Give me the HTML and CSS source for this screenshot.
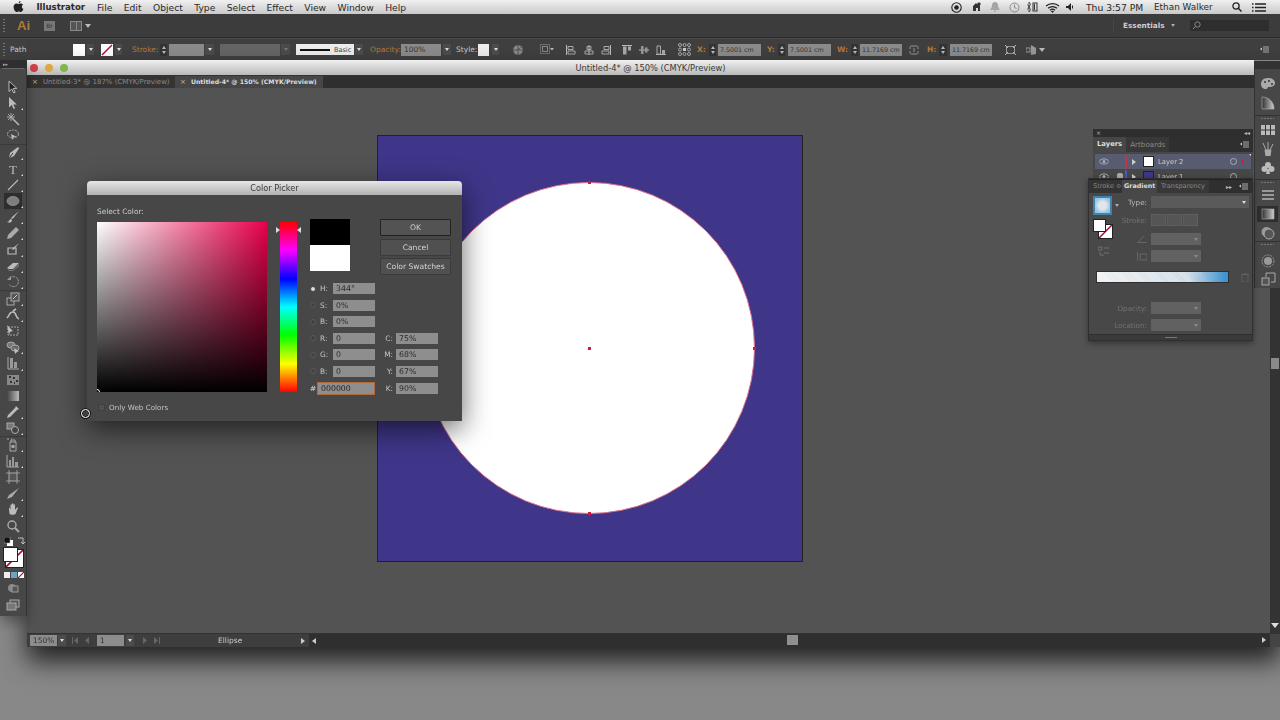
FILE: index.html
```html
<!DOCTYPE html>
<html lang="en">
<head>
    <meta charset="UTF-8">
    <title>Illustrator - Color Picker</title>
    <link rel="stylesheet" href="styles.css">
</head>
<body>

    <!-- Mac menu bar -->
    <div class="menubar">
        <svg class="apple" width="11" height="12" viewBox="0 0 11 12"><path d="M7.6 0c.1 1-.8 2.3-2 2.3C5.5 1.200 6.500.2 7.600 0zM5.600 3c.6 0 1.200-.5 2.200-.5.8 0 1.700.4 2.200 1.200-1.800 1-1.500 3.500.4 4.300-.5 1.300-1.500 3.100-2.600 3.100-.8 0-1.100-.5-2-.5s-1.200.5-2 .5C2.300 11.100.6 8.300.6 6 .6 3.800 2 2.600 3.400 2.600c.9 0 1.600.4 2.200.4z"/></svg>
        <span class="menu-app">Illustrator</span>
        <span class="menu-item">File</span>
        <span class="menu-item">Edit</span>
        <span class="menu-item">Object</span>
        <span class="menu-item">Type</span>
        <span class="menu-item">Select</span>
        <span class="menu-item">Effect</span>
        <span class="menu-item">View</span>
        <span class="menu-item">Window</span>
        <span class="menu-item">Help</span>
        <div class="menu-right">
            <svg width="11" height="11" viewBox="0 0 11 11"><circle cx="5.5" cy="5.5" r="4.7" fill="none" stroke="#222" stroke-width="1.1"/><circle cx="5.5" cy="5.5" r="2.3" fill="#222"/></svg>
            <svg class="mr-fire" width="10" height="10" viewBox="0 0 10 10"><path d="M1 9V4l3-3 1 1 2-2 2 2-1 1v6H6V6H4v3z" fill="#333"/></svg>
            <svg class="mr-bell" width="10" height="10" viewBox="0 0 10 10"><path d="M5 0c2 0 3 1.500 3 3.500 0 2 1 3 1.500 3.500v1h-9V7C1 6.500 2 5.500 2 3.500 2 1.500 3 0 5 0zM4 8.500h2V10H4z" fill="#a5a5a5"/></svg>
            <svg class="mr-clock" width="11" height="11" viewBox="0 0 11 11"><circle cx="5.5" cy="5.5" r="4.5" fill="none" stroke="#888"/><path d="M5.5 2.500v3l2 1" fill="none" stroke="#888"/></svg>
            <svg class="mr-bt" width="11" height="10" viewBox="0 0 11 10"><path d="M.5 2.500l3 5M3.500 2.500l-3 5M2 0v10M2 0l1.500 2.500M2 10l1.500-2.500" fill="none" stroke="#333" stroke-width=".8"/><rect x="6" y="1" width="4" height="8" fill="none" stroke="#333"/><rect x="7" y="2" width="1" height="6" fill="#333"/></svg>
            <svg class="mr-wifi" width="15" height="11" viewBox="0 0 15 11"><path d="M1 4c3.500-3.300 9.500-3.300 13 0M3 6.200c2.500-2.200 6.500-2.200 9 0M5 8.200c1.400-1.100 3.600-1.100 5 0" fill="none" stroke="#222" stroke-width="1.2"/><path d="M7.500 11l-1.500-1.700c1-.6 2-.6 3 0z" fill="#222"/></svg>
            <svg class="mr-vol" width="8" height="8" viewBox="0 0 8 8"><path d="M0 3h2l3-3v8L2 5H0z" fill="#222"/><path d="M6.500 2.500v3" stroke="#222"/></svg>
            <span class="mr-clocktext">Thu 3:57 PM</span>
            <span class="mr-user">Ethan Walker</span>
            <svg class="mr-search" width="10" height="10" viewBox="0 0 10 10"><circle cx="4" cy="4" r="3.1" fill="none" stroke="#222" stroke-width="1.3"/><path d="M6.300 6.300L9.500 9.500" stroke="#222" stroke-width="1.5"/></svg>
            <svg class="mr-list" width="14" height="9" viewBox="0 0 14 9"><path d="M0 1h1.500M0 4.500h1.500M0 8h1.500M3 1h11M3 4.500h11M3 8h11" stroke="#222" stroke-width="1.5"/></svg>
        </div>
    </div>

    <!-- App bar -->
    <div class="appbar">
        <span class="grip"></span>
        <span class="ai-logo">Ai</span>
        <span class="br-box">Br</span>
        <span class="arrange-box"><i></i><i></i></span>
        <span class="tri small"></span>
        <div class="appbar-right">
            <span class="essentials">Essentials</span>
            <span class="tri tiny"></span>
            <span class="help-search">
                <svg width="9" height="9" viewBox="0 0 9 9"><circle cx="5.5" cy="3.5" r="2.7" fill="none" stroke="#888"/><path d="M3.500 5.500L1 8" stroke="#888"/></svg>
            </span>
        </div>
    </div>

    <!-- Control bar -->
    <div class="controlbar">
        <span class="grip"></span>
        <span class="lbl w13 m5">Path</span>
        <span class="swatch white m50"></span>
        <span class="dd m2 w7"></span>
        <svg class="swatch m7" width="12" height="12" viewBox="0 0 12 12"><rect width="12" height="12" fill="#fff"/><path d="M1 11L11 1" stroke="#a01232" stroke-width="1.5"/></svg>
        <span class="dd m2 w7"></span>
        <span class="lbl orange w22 m10">Stroke:</span>
        <span class="spin m6"></span>
        <span class="field m2 w35"></span>
        <span class="dd m1 w9"></span>
        <span class="field dim m6 w60"></span>
        <span class="dd dimdd m1 w9"></span>
        <span class="line-preview m6"><i></i><b>Basic</b></span>
        <span class="dd m1 w8"></span>
        <span class="lbl orange w26 m7">Opacity:</span>
        <span class="field m5 w40">100%</span>
        <span class="dd m2 w8"></span>
        <span class="lbl w17 m5">Style:</span>
        <span class="swatch light w11 m5"></span>
        <span class="dd m3 w7"></span>
        <svg class="m14" width="10" height="10" viewBox="0 0 10 10"><circle cx="5" cy="5" r="4.8" fill="#8a8a8a"/><path d="M5 0v10M0 5h10M5 5l3-3" stroke="#333" stroke-width=".6"/></svg>
        <svg class="m17" width="14" height="11" viewBox="0 0 14 11"><rect x=".5" y=".5" width="9" height="9" fill="none" stroke="#999" stroke-dasharray="1 1"/><rect x="2.5" y="2.5" width="5" height="5" fill="none" stroke="#888"/><path d="M10 4h4l-2 2.500z" fill="#bbb"/></svg>
        <svg class="m12" width="10" height="10" viewBox="0 0 10 10"><path d="M.5 0v10" stroke="#bbb"/><path d="M2 1.500h5v3H2zM2 6h7v3H2z" fill="none" stroke="#aaa"/></svg>
        <svg class="m8" width="10" height="10" viewBox="0 0 10 10"><path d="M5 0v10" stroke="#bbb"/><path d="M3 1.500h4v3H3zM1 6h8v3H1z" fill="none" stroke="#aaa"/></svg>
        <svg class="m7" width="10" height="10" viewBox="0 0 10 10"><path d="M9.500 0v10" stroke="#bbb"/><path d="M3 1.500h5v3H3zM1 6h7v3H1z" fill="none" stroke="#aaa"/></svg>
        <svg class="m11" width="10" height="10" viewBox="0 0 10 10"><path d="M0 .5h10" stroke="#bbb"/><path d="M1 1.500h3.500v8H1z" fill="#aaa"/><path d="M6 1.500h3v4H6z" fill="#aaa"/></svg>
        <svg class="m7" width="10" height="10" viewBox="0 0 10 10"><path d="M0 5h10" stroke="#bbb"/><path d="M2 1h2.500v8H2zM6 2.500h2.500v5H6z" fill="#999"/></svg>
        <svg class="m7" width="10" height="10" viewBox="0 0 10 10"><path d="M0 9.500h10" stroke="#bbb"/><path d="M1 1h3.500v8H1z" fill="none" stroke="#aaa"/><path d="M6 5h3v4H6z" fill="#aaa"/></svg>
        <svg class="m12" width="13" height="13" viewBox="0 0 13 13"><g fill="none" stroke="#aaa"><circle cx="2" cy="2" r="1.5"/><circle cx="6.5" cy="2" r="1.5"/><circle cx="11" cy="2" r="1.5"/><circle cx="2" cy="6.5" r="1.5"/><circle cx="11" cy="6.5" r="1.5"/><circle cx="2" cy="11" r="1.5"/><circle cx="6.5" cy="11" r="1.5"/><circle cx="11" cy="11" r="1.5"/></g><rect x="5" y="5" width="3" height="3" fill="#ccc"/></svg>
        <span class="lbl orange bold w6 m6">X:</span>
        <span class="spin m6"></span>
        <span class="field num m2 w43">7.5001 cm</span>
        <span class="lbl orange bold w6 m6">Y:</span>
        <span class="spin m5"></span>
        <span class="field num m3 w43">7.5001 cm</span>
        <span class="lbl orange bold w8 m6">W:</span>
        <span class="spin m6"></span>
        <span class="field num m2 w42">11.7169 cm</span>
        <svg class="m7" width="10" height="10" viewBox="0 0 10 10"><path d="M1 4V2.500A1.500 1.500 0 0 1 2.500 1h5A1.500 1.500 0 0 1 9 2.500V4M1 6v1.500A1.500 1.500 0 0 0 2.500 9h5A1.500 1.500 0 0 0 9 7.500V6M5 3v4" fill="none" stroke="#999"/></svg>
        <span class="lbl orange bold w7 m8">H:</span>
        <span class="spin m5 w8"></span>
        <span class="field num m3 w42">11.7169 cm</span>
        <svg class="m13" width="11" height="10" viewBox="0 0 11 10"><rect x="1.5" y="1.5" width="8" height="7" fill="none" stroke="#999"/><path d="M0 0l3 3M11 0L8 3M0 10l3-3M11 10L8 7" stroke="#bbb"/></svg>
        <svg class="m10" width="10" height="10" viewBox="0 0 10 10"><rect x="0" y="3" width="4" height="4" fill="none" stroke="#999"/><path d="M5 0l5 3v6L5 10z" fill="#999"/></svg>
        <span class="tri small m3"></span>
        <svg class="panel-menu" width="9" height="7" viewBox="0 0 9 7"><path d="M3 0h6M3 2h6M3 4h6M3 6h6" stroke="#aaa"/><path d="M0 3l2-1.500v3z" fill="#ccc"/></svg>
    </div>

    <!-- Document window -->
    <div class="docwin">
        <div class="doc-title">
            <div class="lights"><i class="red"></i><i class="yellow"></i><i class="green"></i></div>
            <span>Untitled-4* @ 150% (CMYK/Preview)</span>
        </div>
        <div class="doc-tabs">
            <div class="doc-tab"><b>×</b>Untitled-3* @ 187% (CMYK/Preview)</div>
            <div class="doc-tab active"><b>×</b>Untitled-4* @ 150% (CMYK/Preview)</div>
        </div>
        <div class="doc-canvas">
            <div class="artboard">
                <div class="ellipse">
                    <i class="anchor center"></i>
                    <i class="anchor top"></i>
                    <i class="anchor bottom"></i>
                    <i class="anchor right"></i>
                </div>
            </div>
            <div class="vscroll">
                <span class="vthumb"></span>
                <span class="tri down"></span>
            </div>
        </div>
        <div class="statusbar">
            <div class="status-left">
                <span class="field zoomfield">150%</span>
                <span class="dd w8 m1"></span>
                <svg class="navgroup" width="20" height="7" viewBox="0 0 20 7"><path d="M0 0h1v7H0zM6 0v7L2 3.500zM17 0v7l-4-3.500z" fill="#666"/></svg>
                <span class="field pagefield">1</span>
                <span class="dd w8 m2"></span>
                <svg class="navgroup" width="20" height="7" viewBox="0 0 20 7"><path d="M3 0v7l4-3.500zM14 0v7l4-3.500zM19 0h1v7h-1z" fill="#666"/></svg>
                <span class="status-name">Ellipse</span>
                <span class="tri right"></span>
            </div>
            <div class="hscroll">
                <span class="tri left"></span>
                <span class="hthumb"></span>
                <span class="tri right end"></span>
            </div>
            <span class="corner"></span>
        </div>
    </div>

    <!-- Tools panel -->
    <div class="toolbar">
        <div class="tool-head">▸▸</div>
        <div class="tool"><svg viewBox="0 0 14 14"><path d="M3 1v10.500l2.700-2.500 2 4 1.500-.8-2-3.800h3.600z" fill="#222" stroke="#bbb"/></svg></div>
        <div class="tool more"><svg viewBox="0 0 14 14"><path d="M3 1v10.500l2.700-2.500 2 4 1.500-.8-2-3.800h3.600z" fill="#bbb"/></svg></div>
        <div class="tool"><svg viewBox="0 0 14 14"><path d="M6 6l7 7" stroke="#bbb" stroke-width="1.5"/><path d="M5 1v8M1 5h8M2 2l6 6M8 2L2 8" stroke="#aaa"/></svg></div>
        <div class="tool gap"><svg viewBox="0 0 14 14"><ellipse cx="7" cy="6" rx="5.5" ry="4" fill="none" stroke="#aaa" stroke-dasharray="2 1"/><path d="M5 6l1 6 2-3 3 0z" fill="#bbb"/></svg></div>
        <div class="tool more"><svg viewBox="0 0 14 14"><path d="M12 1l1 1.500L8 10l-5 2.500L4 7z" fill="#bbb"/><path d="M3 12.500L7 7" stroke="#333"/></svg></div>
        <div class="tool more"><svg viewBox="0 0 14 14"><text x="7" y="12" class="t-glyph">T</text></svg></div>
        <div class="tool more"><svg viewBox="0 0 14 14"><path d="M2 12L12 2" stroke="#bbb" stroke-width="1.1"/></svg></div>
        <div class="tool more selected"><svg viewBox="0 0 14 14"><ellipse cx="7" cy="7" rx="6" ry="4.5" fill="#7d7d7d" stroke="#aaa" stroke-width=".6"/></svg></div>
        <div class="tool more"><svg viewBox="0 0 14 14"><path d="M13 1L6 7 5 9l2-.5L13 1zM5 9c-2 0-1.500 3-4 3 2 1 5 1 5-2z" fill="#bbb"/></svg></div>
        <div class="tool more"><svg viewBox="0 0 14 14"><path d="M10 1l3 3-8 8-4 1 1-4z" fill="#aaa"/></svg></div>
        <div class="tool more"><svg viewBox="0 0 14 14"><path d="M2 6h8v6H2z" fill="none" stroke="#bbb" stroke-width="1.2"/><path d="M13 1L7 6 6 8l2-.5z" fill="#bbb"/></svg></div>
        <div class="tool more"><svg viewBox="0 0 14 14"><path d="M1 9l6-5h6l-6 6H3z" fill="#bbb"/><path d="M1 9l2 2h4l6-6v2l-6 5H3z" fill="#777"/></svg></div>
        <div class="tool more gap"><svg viewBox="0 0 14 14"><path d="M4 3a5 5 0 1 1-1 6" fill="none" stroke="#aaa" stroke-dasharray="2 1"/><path d="M5 1v4H1z" fill="#999"/></svg></div>
        <div class="tool more"><svg viewBox="0 0 14 14"><rect x="1" y="6" width="7" height="7" fill="none" stroke="#aaa"/><rect x="5" y="1" width="8" height="8" fill="#555" stroke="#aaa"/><path d="M7 7l4-4" stroke="#ccc"/></svg></div>
        <div class="tool more"><svg viewBox="0 0 14 14"><path d="M1 10c3-3 2-6 6-6s2 6 6 7M7 3l3-2" fill="none" stroke="#bbb" stroke-width="1.6"/></svg></div>
        <div class="tool"><svg viewBox="0 0 14 14"><rect x="2" y="3" width="10" height="8" fill="none" stroke="#aaa" stroke-dasharray="2 1"/><path d="M1 1l6 6-3 1-1 3z" fill="#bbb"/></svg></div>
        <div class="tool more"><svg viewBox="0 0 14 14"><ellipse cx="5" cy="5" rx="4" ry="3" fill="#777" stroke="#aaa"/><ellipse cx="9" cy="8" rx="4" ry="3" fill="#666" stroke="#aaa"/><path d="M8 8l1 6 2-2 2-1z" fill="#bbb"/></svg></div>
        <div class="tool more"><svg viewBox="0 0 14 14"><path d="M2 1v12h11" fill="none" stroke="#aaa"/><path d="M4 2h3v10H4zM8 6h3v6H8z" fill="#999"/></svg></div>
        <div class="tool"><svg viewBox="0 0 14 14"><rect x="1" y="2" width="12" height="10" fill="#888"/><path d="M3 3h2v2H3zM7 4h2v2H7zM10 7h2v2h-2zM4 8h2v2H4zM8 9h1v2H8z" fill="#333"/></svg></div>
        <div class="tool"><svg viewBox="0 0 14 14"><defs><linearGradient id="tg"><stop offset="0" stop-color="#444"/><stop offset="1" stop-color="#bbb"/></linearGradient></defs><rect x="1" y="2" width="12" height="10" fill="url(#tg)"/></svg></div>
        <div class="tool more"><svg viewBox="0 0 14 14"><path d="M10 1l3 3-2 1-7 7-3 1 1-3 7-7z" fill="#bbb"/></svg></div>
        <div class="tool more gap"><svg viewBox="0 0 14 14"><rect x="1" y="2" width="7" height="6" fill="#777" stroke="#aaa"/><circle cx="9" cy="9" r="3.5" fill="#444" stroke="#aaa"/></svg></div>
        <div class="tool more"><svg viewBox="0 0 14 14"><path d="M1 1h2M5 1h1" stroke="#aaa"/><path d="M4 4h6v9H4z" fill="none" stroke="#aaa"/><circle cx="7" cy="8.5" r="1.8" fill="#aaa"/><path d="M5 4V2h4v2" fill="none" stroke="#aaa"/></svg></div>
        <div class="tool more"><svg viewBox="0 0 14 14"><path d="M1 13V1M1 13h12" stroke="#aaa"/><path d="M3 6h2v7H3zM6 3h2v10H6zM9 8h3v5H9z" fill="#999"/></svg></div>
        <div class="tool"><svg viewBox="0 0 14 14"><rect x="3" y="3" width="8" height="8" fill="#555" stroke="#aaa"/><path d="M3 0v3H0M11 0v3h3M3 14v-3H0M11 14v-3h3" fill="none" stroke="#999"/></svg></div>
        <div class="tool more"><svg viewBox="0 0 14 14"><path d="M13 1L3 8l-2 4 5-2z" fill="#aaa"/></svg></div>
        <div class="tool more"><svg viewBox="0 0 14 14"><path d="M3 6c0-3 1-1 1.500 1l0-5c0-1 1.500-1 1.500 0v4-5c0-1 1.500-1 1.500 0v5-4c0-1 1.500-1 1.500 0v5l1.500-2c1-1 2 0 1 1l-2 5c-1 1-5 1-6 0z" fill="#bbb"/></svg></div>
        <div class="tool"><svg viewBox="0 0 14 14"><circle cx="6" cy="6" r="4" fill="none" stroke="#aaa" stroke-width="1.4"/><path d="M9 9l4 4" stroke="#aaa" stroke-width="2"/></svg></div>
        <div class="fill-tools">
            <div class="mini-row">
                <svg width="9" height="9" viewBox="0 0 9 9"><rect x="3" y="3" width="6" height="6" fill="#fff"/><rect width="6" height="6" fill="#111" stroke="#bbb" stroke-width=".5"/></svg>
                <svg width="9" height="8" viewBox="0 0 9 8"><path d="M1 1h5v5M4 5l2 2 2-2" fill="none" stroke="#bbb"/></svg>
            </div>
            <div class="fillstroke">
                <span class="fs-stroke"><svg width="17" height="17" viewBox="0 0 17 17"><rect width="17" height="17" fill="#fff"/><path d="M0 17L17 0" stroke="#9c1230" stroke-width="1.6"/></svg></span>
                <span class="fs-fill"></span>
            </div>
            <div class="mode-row"><i class="m-white"></i><i class="m-blue"></i><svg width="6" height="6" viewBox="0 0 6 6"><rect width="6" height="6" fill="#fff"/><path d="M0 6l6-6" stroke="#a01232" stroke-width="1.2"/></svg></div>
        </div>
        <div class="tool"><svg viewBox="0 0 14 14"><circle cx="6" cy="7" r="4" fill="#888"/><rect x="6" y="5" width="6" height="6" fill="#555" stroke="#999"/></svg></div>
        <div class="tool screen"><svg viewBox="0 0 14 14"><rect x="4" y="2" width="9" height="7" fill="#555" stroke="#aaa"/><rect x="1" y="5" width="9" height="7" fill="#777" stroke="#aaa"/></svg></div>
    </div>

    <!-- Panel dock -->
    <div class="dock">
        <div class="dock-grip"></div>
        <div class="dock-group">
            <div class="dock-btn"><svg viewBox="0 0 16 14"><path d="M8 1C3 1 1 4 1 7s2 5 5 5c2 0 1-2 3-2 3 0 6-1 6-4s-3-5-7-5z" fill="#aaa"/><circle cx="5" cy="5" r="1" fill="#333"/><circle cx="9" cy="4" r="1" fill="#333"/><circle cx="12" cy="7" r="1" fill="#333"/></svg></div>
            <div class="dock-btn"><svg viewBox="0 0 16 14"><defs><linearGradient id="dg1"><stop offset="0" stop-color="#333"/><stop offset="1" stop-color="#ccc"/></linearGradient></defs><path d="M2 1c7 0 12 5 12 12H2z" fill="url(#dg1)" stroke="#bbb" stroke-width=".6"/></svg></div>
        </div>
        <div class="dock-group">
            <div class="dock-btn"><svg viewBox="0 0 16 14"><rect x="1" y="2" width="14" height="10" fill="#bbb"/><path d="M5.500 2v10M10.500 2v10M1 7h14" stroke="#333"/></svg></div>
            <div class="dock-btn"><svg viewBox="0 0 16 14"><path d="M5 8h6l-1 6H6zM3 1l3 7M8 0v8M13 2l-3 6" stroke="#aaa" fill="#aaa"/></svg></div>
            <div class="dock-btn"><svg viewBox="0 0 16 14"><circle cx="8" cy="4" r="3" fill="#bbb"/><circle cx="4.5" cy="8" r="3" fill="#bbb"/><circle cx="11.5" cy="8" r="3" fill="#bbb"/><path d="M7 8h2l1 5H6z" fill="#bbb"/></svg></div>
        </div>
        <div class="dock-group">
            <div class="dock-btn"><svg viewBox="0 0 16 14"><path d="M2 2h12v2H2zM2 6h12v2H2zM2 10h12v2H2z" fill="#999"/></svg></div>
            <div class="dock-btn active"><svg viewBox="0 0 16 14"><defs><linearGradient id="dg2"><stop offset="0" stop-color="#333"/><stop offset="1" stop-color="#ccc"/></linearGradient></defs><rect x="2" y="2" width="12" height="10" fill="url(#dg2)" stroke="#aaa" stroke-width=".6"/></svg></div>
            <div class="dock-btn"><svg viewBox="0 0 16 14"><circle cx="6.5" cy="6" r="5" fill="#999"/><circle cx="9" cy="8" r="5" fill="#555" stroke="#aaa"/></svg></div>
        </div>
        <div class="dock-group">
            <div class="dock-btn"><svg viewBox="0 0 16 14"><circle cx="8" cy="7" r="6" fill="none" stroke="#999" stroke-dasharray="2 1"/><circle cx="8" cy="7" r="4" fill="#999"/></svg></div>
            <div class="dock-btn"><svg viewBox="0 0 16 14"><path d="M6 5V1h9v9h-4" fill="none" stroke="#aaa"/><rect x="2" y="6" width="7" height="7" fill="#555" stroke="#aaa"/></svg></div>
        </div>
    </div>

    <!-- Layers panel -->
    <div class="panel layers">
        <div class="panel-top"><span>×</span><span>◂◂</span></div>
        <div class="panel-tabs">
            <span class="ptab on">Layers</span>
            <span class="ptab">Artboards</span>
            <svg class="panel-menu" width="9" height="7" viewBox="0 0 9 7"><path d="M3 0h6M3 2h6M3 4h6M3 6h6" stroke="#aaa"/><path d="M0 3l2-1.500v3z" fill="#ccc"/></svg>
        </div>
        <div class="layer-row sel">
            <svg class="eye" width="10" height="7" viewBox="0 0 10 7"><path d="M0 3.500C2 0 8 0 10 3.500 8 7 2 7 0 3.500z" fill="none" stroke="#aab"/><circle cx="5" cy="3.5" r="1.5" fill="#aab"/></svg>
            <span class="lock"></span>
            <span class="color-bar red"></span>
            <span class="tri right"></span>
            <span class="thumb white"></span>
            <span class="layer-name">Layer 2</span>
            <span class="target"></span>
            <span class="sel-box"></span>
        </div>
        <div class="layer-row">
            <svg class="eye" width="10" height="7" viewBox="0 0 10 7"><path d="M0 3.500C2 0 8 0 10 3.500 8 7 2 7 0 3.500z" fill="none" stroke="#aaa"/><circle cx="5" cy="3.5" r="1.5" fill="#aaa"/></svg>
            <span class="lock on"></span>
            <span class="color-bar blue"></span>
            <span class="tri right"></span>
            <span class="thumb navy"></span>
            <span class="layer-name">Layer 1</span>
            <span class="target"></span>
        </div>
    </div>

    <!-- Gradient panel -->
    <div class="panel gradient">
        <div class="panel-tabs big">
            <span class="ptab stroke-tab">Stroke ≎</span>
            <span class="ptab on grad-tab">Gradient</span>
            <span class="ptab">Transparency</span>
            <span class="pan-more">▸▸</span>
            <svg class="panel-menu" width="9" height="7" viewBox="0 0 9 7"><path d="M3 0h6M3 2h6M3 4h6M3 6h6" stroke="#aaa"/><path d="M0 3l2-1.500v3z" fill="#ccc"/></svg>
        </div>
        <div class="grad-body">
            <div class="grad-left">
                <div class="grad-preview-wrap">
                    <span class="grad-preview"></span>
                    <span class="tri tiny"></span>
                </div>
                <div class="fillstroke small">
                    <span class="fs-stroke"><svg width="13" height="13" viewBox="0 0 13 13"><rect width="13" height="13" fill="#fff"/><path d="M0 13L13 0" stroke="#9c1230" stroke-width="1.5"/></svg></span>
                    <span class="fs-fill"></span>
                </div>
                <svg class="reverse" width="11" height="10" viewBox="0 0 11 10"><path d="M0 1h4v3H0zM6 2h5M6 7h5M2 6v3h4" fill="none" stroke="#707070"/></svg>
            </div>
            <div class="grad-form">
                <div class="g-row first"><label>Type:</label><span class="g-select wide"><span class="tri tiny"></span></span></div>
                <div class="g-row stroke-row"><label class="off">Stroke:</label><span class="g-btns"><i></i><i></i><i></i></span></div>
                <div class="g-row angle-row"><label class="off"><svg width="10" height="8" viewBox="0 0 10 8"><path d="M0 7.500h10M1 7.500L7 1" fill="none" stroke="#666"/></svg></label><span class="g-select"><span class="tri tiny dim"></span></span></div>
                <div class="g-row aspect-row"><label class="off"><svg width="10" height="9" viewBox="0 0 10 9"><path d="M.5 0v9M3 2h7v6H3z" fill="none" stroke="#666"/></svg></label><span class="g-select"><span class="tri tiny dim"></span></span></div>
            </div>
        </div>
        <div class="grad-ramp-row">
            <span class="grad-ramp"></span>
            <svg width="8" height="9" viewBox="0 0 8 9"><path d="M0 1.500h8M1 2v7h6V2M3 1V0h2v1" fill="none" stroke="#5f5f5f"/></svg>
        </div>
        <div class="grad-bottom">
            <div class="g-row"><label class="off">Opacity:</label><span class="g-select"><span class="tri tiny dim"></span></span></div>
            <div class="g-row"><label class="off">Location:</label><span class="g-select"><span class="tri tiny dim"></span></span></div>
        </div>
        <div class="panel-foot"><i></i></div>
    </div>

    <!-- Color Picker dialog -->
    <div class="dialog">
        <div class="dialog-title">Color Picker</div>
        <div class="dialog-body">
            <div class="select-label">Select Color:</div>
            <div class="picker-main">
                <div class="color-field"><i class="field-marker"></i></div>
                <div class="hue-wrap">
                    <i class="hue-arrow l"></i>
                    <div class="hue-bar"></div>
                    <i class="hue-arrow r"></i>
                </div>
                <div class="picker-right">
                    <div class="picker-top">
                        <div class="new-old"><i class="new"></i><i class="old"></i></div>
                        <div class="dlg-buttons">
                            <button class="dlg-btn default">OK</button>
                            <button class="dlg-btn">Cancel</button>
                            <button class="dlg-btn">Color Swatches</button>
                        </div>
                    </div>
                    <div class="val-grid">
                        <span class="vlabel"><i class="radio on"></i>H:</span><span class="val">344°</span><span></span><span></span>
                        <span class="vlabel"><i class="radio"></i>S:</span><span class="val">0%</span><span></span><span></span>
                        <span class="vlabel"><i class="radio"></i>B:</span><span class="val">0%</span><span></span><span></span>
                        <span class="vlabel"><i class="radio"></i>R:</span><span class="val">0</span><span class="clabel">C:</span><span class="val">75%</span>
                        <span class="vlabel"><i class="radio"></i>G:</span><span class="val">0</span><span class="clabel">M:</span><span class="val">68%</span>
                        <span class="vlabel"><i class="radio"></i>B:</span><span class="val">0</span><span class="clabel">Y:</span><span class="val">67%</span>
                        <span class="vlabel hash">#</span><span class="val hex">000000</span><span class="clabel">K:</span><span class="val">90%</span>
                    </div>
                </div>
            </div>
            <div class="web-colors"><i class="check"></i>Only Web Colors</div>
        </div>
    </div>

    <span class="cursor-ring"></span>

</body>
</html>
```

FILE: styles.css
```css
/* Général */
html, body {
    margin: 0;
    height: 720px;
    overflow: hidden;
}
body {
    position: relative;
    width: 1280px;
    background: #888;
    font-family: "DejaVu Sans", sans-serif;
    font-size: 7.5px;
    color: #ccc;
    filter: blur(0.35px);
}
i, b { font-style: normal; font-weight: normal; }
svg { display: block; flex: none; }

/* Menu bar */
.menubar {
    height: 14px;
    display: flex;
    align-items: center;
    gap: 11.4px;
    padding-left: 13px;
    background: linear-gradient(#f0f0f0, #c9c9c9);
    color: #2a2a2a;
    font-size: 9.2px;
}
.apple { fill: #222; margin-right: 1px; }
.menu-app { font-weight: bold; font-size: 8.6px; width: 48px; margin-right: 1.2px; }
.menu-right {
    margin-left: auto;
    display: flex;
    align-items: center;
    margin-right: 14px;
}
.mr-fire { margin-left: 10px; }
.mr-bell { margin-left: 8px; }
.mr-clock { margin-left: 9px; }
.mr-bt { margin-left: 7px; }
.mr-wifi { margin-left: 7px; }
.mr-vol { margin-left: 6px; }
.mr-clocktext { margin-left: 12px; width: 58px; white-space: nowrap; }
.mr-user { margin-left: 10px; width: 64px; white-space: nowrap; font-size: 8.9px; }
.mr-search { margin-left: 14px; }
.mr-list { margin-left: 10px; }

/* App bar */
.appbar {
    height: 24px;
    display: flex;
    align-items: center;
    background: #3c3c3c;
    border-bottom: 1px solid #2b2b2b;
    box-sizing: border-box;
}
.grip {
    width: 2px;
    height: 14px;
    margin-left: 3px;
    flex: none;
    background: repeating-linear-gradient(#777 0 1px, transparent 1px 3px);
}
.ai-logo {
    margin-left: 12px;
    width: 20px;
    color: #b17a36;
    font: bold 13px "Liberation Sans", sans-serif;
}
.br-box {
    margin-left: 7px;
    width: 11px;
    height: 10px;
    background: #777;
    color: #333;
    font-size: 6px;
    line-height: 10px;
    text-align: center;
}
.arrange-box {
    margin-left: 15px;
    width: 12px;
    height: 10px;
    background: #8a8a8a;
    display: flex;
    gap: 1px;
    padding: 1px;
    box-sizing: border-box;
}
.arrange-box i { flex: 1; background: #555; }
.appbar-right {
    margin-left: auto;
    display: flex;
    align-items: center;
    height: 100%;
    margin-right: 11px;
}
.essentials {
    width: 45px;
    padding-left: 9px;
    border-left: 1px solid #484848;
    font-weight: bold;
    font-size: 7.3px;
    color: #cfcfcf;
    line-height: 14px;
}
.help-search {
    margin-left: 15px;
    width: 79px;
    height: 11px;
    background: #2e2e2e;
    padding: 1px 2px;
    box-sizing: border-box;
}
.appbar-right .tiny { margin-left: 3px; }

/* Triangles */
.tri { display: inline-block; flex: none; width: 0; height: 0; }
.tri.small { margin-left: 3px; border: 3px solid transparent; border-top: 4px solid #bbb; border-bottom: 0; }
.tri.tiny { border: 2.5px solid transparent; border-top: 3px solid #aaa; border-bottom: 0; }
.tri.tiny.dim { border-top-color: #8a8a8a; }
.tri.right { border: 3.5px solid transparent; border-left: 4px solid #ccc; border-right: 0; }
.tri.left { border: 3.5px solid transparent; border-right: 4px solid #ccc; border-left: 0; }
.tri.down { border: 4px solid transparent; border-top: 5px solid #ddd; border-bottom: 0; }

/* Control bar */
.controlbar {
    height: 22px;
    display: flex;
    align-items: center;
    background: #404040;
    border-top: 1px solid #4a4a4a;
    box-sizing: border-box;
    font-size: 7.5px;
    color: #c8c8c8;
}
.lbl { flex: none; white-space: nowrap; }
.lbl.orange { color: #b57b38; }
.lbl.bold { font-weight: bold; }
.swatch { flex: none; width: 12px; height: 12px; box-sizing: border-box; }
.swatch.white { background: #fff; }
.swatch.light { background: #eee; }
.dd {
    flex: none;
    height: 11px;
    background: #4c4c4c;
    display: flex;
    align-items: center;
    justify-content: center;
}
.dd::after {
    content: "";
    border: 2.5px solid transparent;
    border-top: 3px solid #ddd;
    border-bottom: 0;
}
.dd.dimdd::after { border-top-color: #777; }
.spin {
    flex: none;
    width: 7px;
    height: 12px;
    background: #343434;
    display: flex;
    flex-direction: column;
    align-items: center;
    justify-content: center;
    gap: 2px;
}
.spin::before {
    content: "";
    border: 2px solid transparent;
    border-bottom: 3px solid #bbb;
    border-top: 0;
}
.spin::after {
    content: "";
    border: 2px solid transparent;
    border-top: 3px solid #bbb;
    border-bottom: 0;
}
.field {
    flex: none;
    height: 12px;
    line-height: 12px;
    background: #8c8c8c;
    color: #333;
    padding-left: 3px;
    box-sizing: border-box;
    overflow: hidden;
    white-space: nowrap;
}
.field.num { font-size: 6.3px; padding-left: 2px; }
.field.dim { background: #666; }
.line-preview {
    flex: none;
    width: 58px;
    height: 11px;
    background: #eee;
    display: flex;
    align-items: center;
    color: #444;
    font-size: 6.5px;
}
.line-preview i { margin-left: 4px; width: 30px; height: 2px; background: #111; }
.line-preview b { margin-left: 4px; }
.panel-menu { margin-left: auto; margin-right: 11px; }

/* Largeurs et marges du control bar */
.w6 { width: 6px; } .w7 { width: 7px; } .w8 { width: 8px; } .w9 { width: 9px; }
.w11 { width: 11px; } .w13 { width: 13px; } .w17 { width: 17px; } .w22 { width: 22px; }
.w26 { width: 26px; } .w35 { width: 35px; } .w40 { width: 40px; } .w42 { width: 42px; }
.w43 { width: 43px; } .w60 { width: 60px; }
.m1 { margin-left: 1px; } .m2 { margin-left: 2px; } .m3 { margin-left: 3px; }
.m5 { margin-left: 5px; } .m6 { margin-left: 6px; }
.m7 { margin-left: 7px; } .m8 { margin-left: 8px; } .m10 { margin-left: 10px; }
.m11 { margin-left: 11px; } .m12 { margin-left: 12px; } .m13 { margin-left: 13px; }
.m14 { margin-left: 14px; } .m17 { margin-left: 17px; } .m50 { margin-left: 50px; }

/* Fenêtre du document */
.docwin {
    position: absolute;
    left: 27px;
    top: 60px;
    width: 1253px;
    height: 587px;
    display: flex;
    flex-direction: column;
    box-shadow: 0 14px 24px rgba(0, 0, 0, 0.75);
}
.doc-title {
    height: 16px;
    flex: none;
    display: flex;
    align-items: center;
    justify-content: center;
    width: 1227px;
    padding-left: 20px;
    position: relative;
    background: linear-gradient(#f0f0f0, #b9b9b9);
    border-bottom: 1px solid #333;
    box-sizing: border-box;
    color: #3a3a3a;
    font-size: 8.3px;
}
.lights {
    position: absolute;
    left: 3px;
    top: 4px;
    display: flex;
    gap: 7px;
}
.lights i { width: 8px; height: 8px; border-radius: 50%; }
.lights .red { background: #d6404a; }
.lights .yellow { background: #dba93f; }
.lights .green { background: #7fb64e; }
.doc-tabs {
    height: 12px;
    flex: none;
    display: flex;
    background: #2f2f2f;
    font-size: 7px;
    color: #8a8a8a;
}
.doc-tab {
    height: 100%;
    padding-left: 2px;
    width: 143px;
    line-height: 12px;
    white-space: nowrap;
    background: #343434;
}
.doc-tab:first-child { margin-left: 3px; }
.doc-tab.active {
    padding-left: 5px;
    background: #474747;
    color: #dcdcdc;
    font-weight: bold;
    font-size: 6.2px;
}
.doc-tab b { margin-right: 5px; color: #bbb; font-size: 7px; }
.doc-canvas {
    flex: 1;
    position: relative;
    background: #535353;
    border-bottom: 1px solid #333;
}
.artboard {
    position: absolute;
    left: 350px;
    top: 47px;
    width: 424px;
    height: 425px;
    background: #3f3689;
    border: 1px solid #222;
}
.ellipse {
    position: absolute;
    left: 45px;
    top: 46px;
    width: 332px;
    height: 332px;
    box-sizing: border-box;
    border-radius: 50%;
    background: #fff;
    border: 1px solid #e0708a;
}
.anchor {
    position: absolute;
    width: 3px;
    height: 3px;
    background: #c8203c;
}
.anchor.center { left: 164px; top: 164px; }
.anchor.top { left: 164px; top: -2px; }
.anchor.bottom { left: 164px; bottom: -2px; }
.anchor.right { right: -2px; top: 164px; }
.vscroll {
    position: absolute;
    right: 0;
    top: 0;
    bottom: 0;
    width: 10px;
    background: #333;
}
.vthumb {
    position: absolute;
    left: 1px;
    top: 270px;
    width: 8px;
    height: 11px;
    background: #8a8a8a;
}
.vscroll .down { position: absolute; left: 1px; bottom: 5px; }
.statusbar {
    height: 13px;
    flex: none;
    display: flex;
    align-items: center;
    background: #3e3e3e;
    font-size: 7.5px;
}
.status-left {
    width: 282px;
    flex: none;
    display: flex;
    align-items: center;
    padding-left: 3px;
    box-sizing: border-box;
}
.zoomfield { width: 27px; height: 11px; line-height: 11px; }
.pagefield { width: 27px; height: 11px; line-height: 11px; margin-left: 5px; }
.navgroup { margin-left: 6px; }
.status-name { margin-left: 58px; width: 83px; color: #ccc; }
.hscroll {
    flex: 1;
    position: relative;
    height: 100%;
    background: #2f2f2f;
    display: flex;
    align-items: center;
    padding-left: 3px;
}
.hthumb {
    position: absolute;
    left: 478px;
    top: 1px;
    width: 11px;
    height: 10px;
    background: #8f8f8f;
}
.hscroll .end { position: absolute; right: 4px; top: 3px; }
.corner { width: 10px; height: 100%; background: #444; flex: none; }

/* Outils */
.toolbar {
    position: absolute;
    left: 0;
    top: 60px;
    width: 27px;
    height: 556px;
    background: #474747;
    border-right: 1px solid #333;
    box-sizing: border-box;
    box-shadow: 0 6px 14px rgba(0, 0, 0, 0.35);
}
.tool-head {
    height: 8px;
    margin-bottom: 11px;
    background: #2f2f2f;
    font-size: 5px;
    line-height: 8px;
    padding-left: 3px;
    color: #aaa;
    box-shadow: 0 3px 0 -2px #666;
}
.tool {
    height: 16.15px;
    display: flex;
    align-items: center;
    justify-content: center;
    position: relative;
}
.tool svg { width: 14px; height: 14px; }
.tool.more::after {
    content: "";
    position: absolute;
    right: 3px;
    bottom: 1px;
    border: 1.5px solid transparent;
    border-right-color: #ddd;
    border-bottom-color: #ddd;
}
.tool.gap { margin-bottom: 1px; box-shadow: 0 1px 0 #3a3a3a; }
.tool.selected {
    background: #2e2e2e;
    margin: 0 4px;
}
.tool.selected.more::after { right: -1px; }
.t-glyph { font: 13px "Liberation Serif", serif; fill: #bbb; text-anchor: middle; }
.fill-tools { padding: 3px 0 0 3px; height: 46px; box-sizing: border-box; }
.mini-row { display: flex; gap: 4px; padding-left: 1px; }
.fillstroke { position: relative; width: 21px; height: 21px; margin-top: 1px; }
.fs-fill {
    position: absolute;
    left: 0;
    top: 0;
    width: 13px;
    height: 13px;
    background: #fff;
    border: 1px solid #222;
}
.fs-stroke { position: absolute; right: 0; bottom: 0; border: 1px solid #222; }
.mode-row { display: flex; gap: 1px; align-items: center; padding: 4px 0 0 1px; }
.mode-row i { width: 6px; height: 6px; }
.m-white { background: #eee; }
.m-blue { background: #6aa5c8; }
.tool.screen { margin-top: 1px; }

/* Dock */
.dock {
    position: absolute;
    left: 1254px;
    top: 61px;
    width: 26px;
    height: 227px;
    background: #474747;
    border-left: 1px solid #333;
    box-sizing: border-box;
}
.dock-grip { height: 8px; background: #333; }
.dock-group {
    position: relative;
    padding: 7px 0 4px;
    border-bottom: 1px solid #333;
    display: flex;
    flex-direction: column;
    gap: 3px;
}
.dock-group::before {
    content: "";
    position: absolute;
    left: 6px;
    right: 6px;
    top: 2px;
    height: 1px;
    background: repeating-linear-gradient(to right, #777 0 2px, transparent 2px 3px);
}
.dock-group:nth-child(2)::before { display: none; }
.dock-group:nth-child(3) { padding: 6px 0 3px; }
.dock-group:nth-child(4) { padding: 7px 0 0; }
.dock-group:nth-child(5) { padding: 11px 0 0; gap: 2px; border-bottom: 0; }
.dock-btn {
    height: 16px;
    display: flex;
    align-items: center;
    justify-content: center;
}
.dock-btn svg { width: 16px; height: 14px; }
.dock-btn.active { background: #2e2e2e; margin: 0 2px; }

/* Panneaux */
.panel {
    position: absolute;
    box-sizing: border-box;
    background: #474747;
    font-size: 7.2px;
}
.layers {
    left: 1093px;
    top: 129px;
    width: 160px;
    height: 55px;
    overflow: hidden;
}
.panel-top {
    height: 8px;
    background: #2e2e2e;
    display: flex;
    justify-content: space-between;
    padding: 0 3px;
    font-size: 6px;
    line-height: 8px;
    color: #bbb;
}
.panel-tabs {
    height: 15px;
    display: flex;
    align-items: center;
    background: #2f2f2f;
}
.panel-tabs .panel-menu { margin-right: 4px; }
.ptab {
    height: 100%;
    line-height: 15px;
    padding: 0 4px;
    color: #888;
    white-space: nowrap;
    background: #383838;
}
.ptab.on { background: #474747; color: #ddd; font-weight: bold; font-size: 6.8px; }
.layer-row {
    position: relative;
    height: 15px;
    margin: 2px 2px 0;
    display: flex;
    align-items: center;
    color: #ccc;
    font-size: 6.8px;
}
.layer-row + .layer-row { margin-top: 0; }
.layer-row.sel { background: #585c70; }
.layer-row.sel::after {
    content: "";
    position: absolute;
    right: 0;
    top: 0;
    border: 1.5px solid transparent;
    border-top-color: #ddd;
    border-right-color: #ddd;
}
.eye { margin-left: 4px; }
.lock { width: 9px; margin-left: 7px; flex: none; }
.lock.on { width: 6px; height: 7px; margin: 0 2px 0 8px; background: #aaa; border-radius: 2px 2px 0 0; }
.color-bar { width: 2px; height: 14px; flex: none; }
.color-bar.red { background: #c0354a; }
.color-bar.blue { background: #3f5fc0; }
.layer-row .tri { margin-left: 5px; }
.thumb { width: 11px; height: 11px; margin-left: 7px; flex: none; border: 1px solid #222; box-sizing: border-box; }
.thumb.white { background: #fff; }
.thumb.navy { background: #3f3689; }
.layer-name { margin-left: 4px; width: 72px; }
.target { width: 5px; height: 5px; border: 1px solid #aab; border-radius: 50%; flex: none; }
.sel-box { width: 3px; height: 4px; margin-left: 4px; background: #d02040; flex: none; }

.gradient {
    left: 1088px;
    top: 178px;
    width: 165px;
    height: 163px;
    background: #484848;
    border: 1px solid #2f2f2f;
    box-shadow: 0 2px 6px rgba(0, 0, 0, 0.4);
}
.panel-tabs.big { height: 13px; border-top: 1px solid #222; font-size: 6.6px; }
.panel-tabs.big .ptab { line-height: 13px; }
.panel-tabs.big .ptab.on { font-size: 6.4px; }
.panel-tabs.big .stroke-tab { width: 29px; padding: 0 0 0 4px; background: #333; }
.panel-tabs.big .grad-tab { width: 29px; padding: 0 4px 0 2px; }
.pan-more { margin-left: 17px; color: #bbb; font-size: 6px; }
.grad-body { display: flex; padding: 3px 0 0 4px; }
.grad-left { width: 28px; flex: none; }
.grad-preview-wrap { display: flex; align-items: center; gap: 3px; }
.grad-preview {
    width: 19px;
    height: 19px;
    flex: none;
    box-sizing: border-box;
    background: radial-gradient(circle, #dfe7ec 0 35%, #9ac4e0 75%);
    border: 2px solid #3f82ad;
}
.fillstroke.small { width: 20px; height: 20px; margin-top: 4px; }
.fillstroke.small .fs-fill { width: 11px; height: 11px; }
.reverse { margin: 7px 0 0 5px; }
.grad-form { flex: 1; }
.g-row { display: flex; align-items: center; }
.g-row label { width: 26px; text-align: right; margin-right: 4px; display: flex; justify-content: flex-end; white-space: nowrap; color: #bbb; }
.g-row label.off { color: #737373; }
.g-select {
    width: 50px;
    height: 12px;
    background: #616161;
    display: flex;
    align-items: center;
    justify-content: flex-end;
    padding-right: 3px;
    box-sizing: border-box;
}
.g-select.wide { width: 98px; background: #5a5a5a; }
.g-select.wide .tri { border-top-color: #ddd; }
.g-btns { display: flex; gap: 1px; }
.g-btns i { width: 15px; height: 12px; background: #555; border: 1px solid #5f5f5f; box-sizing: border-box; }
.stroke-row { margin-top: 6px; }
.angle-row { margin-top: 7px; }
.aspect-row { margin-top: 5px; }
.grad-ramp-row {
    display: flex;
    align-items: center;
    padding-left: 7px;
    margin-top: 9px;
    gap: 12px;
}
.grad-ramp {
    width: 133px;
    height: 12px;
    background:
        linear-gradient(to right, rgba(245, 245, 245, 0.9), rgba(210, 225, 235, 0.85) 70%, #3f93cf 98%),
        repeating-linear-gradient(45deg, #aaa 0 1px, #fff 1px 2px);
    border: 1px solid #2f2f2f;
    box-sizing: border-box;
}
.grad-bottom {
    margin-top: 19px;
    padding-left: 32px;
    display: flex;
    flex-direction: column;
    gap: 5px;
}
.panel-foot {
    position: absolute;
    left: 0;
    right: 0;
    bottom: 0;
    height: 5px;
    background: #3a3a3a;
    border-top: 1px solid #2f2f2f;
    display: flex;
    justify-content: center;
    align-items: center;
}
.panel-foot i { width: 12px; height: 1px; background: #777; }

/* Color Picker */
.dialog {
    position: absolute;
    left: 87px;
    top: 181px;
    width: 375px;
    height: 240px;
    background: #474747;
    border-radius: 4px 4px 0 0;
    box-shadow: 0 8px 28px rgba(0, 0, 0, 0.6);
}
.dialog-title {
    height: 14px;
    line-height: 14px;
    text-align: center;
    background: linear-gradient(#e6e6e6, #b2b2b2);
    border-radius: 4px 4px 0 0;
    color: #3a3a3a;
    font-size: 8.2px;
}
.dialog-body { padding-left: 10px; }
.select-label { height: 24px; line-height: 33px; color: #cfcfcf; font-size: 7.4px; }
.picker-main { display: flex; height: 176px; }
.color-field {
    margin-top: 3px;
    width: 170px;
    height: 170px;
    position: relative;
    background:
        linear-gradient(transparent, #000),
        linear-gradient(to right, #fff, #e8004b);
}
.field-marker {
    position: absolute;
    left: -3px;
    bottom: -3px;
    width: 6px;
    height: 6px;
    box-sizing: border-box;
    border: 1px solid #fff;
    border-radius: 50%;
    clip-path: inset(0 0 3px 3px);
}
.hue-wrap {
    position: relative;
    margin: 3px 0 0 13px;
    width: 17px;
    height: 170px;
}
.hue-bar {
    height: 100%;
    background: linear-gradient(#ff0000, #ff00ff 16.5%, #0000ff 33.5%, #00ffff 50%, #00ff00 66.5%, #ffff00 83.5%, #ff0000);
}
.hue-arrow { position: absolute; top: 5px; border: 3px solid transparent; }
.hue-arrow.l { left: -4px; border-left: 4px solid #ddd; border-right: 0; }
.hue-arrow.r { right: -4px; border-right: 4px solid #ddd; border-left: 0; }
.picker-right { margin-left: 13px; }
.picker-top { display: flex; height: 64px; }
.new-old { width: 40px; height: 52px; display: flex; flex-direction: column; }
.new-old .new { height: 26px; background: #000; }
.new-old .old { height: 26px; background: #fff; }
.dlg-buttons {
    margin-left: 30px;
    display: flex;
    flex-direction: column;
    gap: 2.5px;
}
.dlg-btn {
    width: 71px;
    height: 17px;
    padding: 0;
    font-family: inherit;
    font-size: 7.6px;
    background: #505050;
    color: #d4d4d4;
    border: 1px solid #3a3a3a;
    border-radius: 1px;
}
.dlg-btn.default { border: 1px solid #222; background: #535353; }
.val-grid {
    display: grid;
    grid-template-columns: 23px 42px 21px 42px;
    grid-auto-rows: 16.6px;
    align-items: start;
}
.vlabel { display: flex; align-items: center; height: 11px; color: #c4c4c4; font-size: 7.4px; }
.radio {
    width: 6px;
    height: 6px;
    margin-right: 4px;
    border-radius: 50%;
    background: #414141;
    border: 1px solid #5a5a5a;
    box-sizing: border-box;
}
.radio.on { background: #ddd; border: 1px solid #444; }
.vlabel.hash { color: #bbb; font-weight: bold; }
.clabel { height: 11px; line-height: 11px; text-align: right; padding-right: 3px; color: #c4c4c4; font-size: 7.4px; }
.val {
    height: 11px;
    line-height: 11px;
    background: #8e8e8e;
    color: #2c2c2c;
    padding-left: 3px;
    font-size: 7.8px;
}
.val.hex {
    margin: -1px 0 0 -16px;
    height: 13px;
    line-height: 13px;
    color: #222;
    box-shadow: inset 0 0 0 1px #b06a3c;
    padding-left: 4px;
}
.web-colors {
    display: flex;
    align-items: center;
    margin-top: 8px;
    color: #c4c4c4;
    font-size: 7.2px;
}
.check {
    width: 7px;
    height: 7px;
    margin: 0 4px 0 1px;
    box-sizing: border-box;
    background: #505050;
    border: 1px solid #404040;
}
.cursor-ring {
    position: absolute;
    left: 81px;
    top: 409px;
    width: 9px;
    height: 9px;
    box-sizing: border-box;
    border: 1.5px solid #fff;
    border-radius: 50%;
    box-shadow: 0 0 0 .7px #000, inset 0 0 0 .7px #000;
}
```
